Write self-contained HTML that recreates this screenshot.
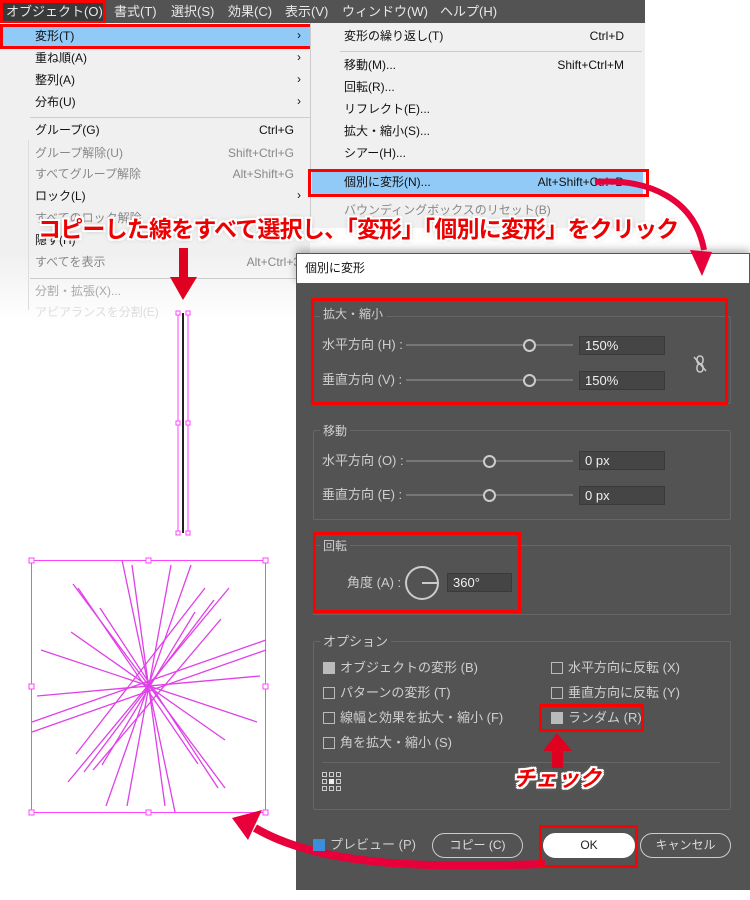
<!DOCTYPE html>
<html><head><meta charset="utf-8">
<style>
*{margin:0;padding:0;box-sizing:border-box}
body{width:750px;height:900px;position:relative;overflow:hidden;background:#fff;font-family:"Liberation Sans","Noto Sans CJK JP",sans-serif;font-size:12px;color:#111;line-height:1.15}
.a{position:absolute;white-space:nowrap}
.mb{left:0;top:0;width:645px;height:23px;background:#535353}
.mi{color:#e8e8e8;font-size:13px;top:5px}
.menu{left:0;top:23px;width:310px;height:300px;background:linear-gradient(#f0f0f0 0,#f0f0f0 230px,#fff 300px)}
.sub{left:310px;top:23px;width:335px;height:205px;background:#f0f0f0;border-left:1px solid #ccc}
.it{font-size:12px;color:#111}
.g{color:#888}
.sc{font-size:12px;text-align:right}
.sep{height:1px;background:#ccc}
.red{border:3px solid #f00}
.dlg{left:296px;top:253px;width:454px;height:637px;background:#535353}
.lt{color:#cfcfcf;font-size:12px}
.box{border:1px solid #666;border-radius:2px}
.inp{background:#454545;border:1px solid #3a3a3a;color:#f0f0f0;font-size:13px;padding:2px 5px;height:19px}
.sl{height:2px;background:#777}
.kn{width:13px;height:13px;border:2px solid #ccc;border-radius:50%;background:#535353}
.cb{width:12px;height:12px;border:1px solid #bbb}
.btn{border:1px solid #ccc;border-radius:13px;color:#ddd;font-size:12px;text-align:center;line-height:23px;height:25px}
.cap{font-weight:bold;color:#e00;text-shadow:2px 0 #fff,-2px 0 #fff,0 2px #fff,0 -2px #fff,2px 2px #fff,-2px -2px #fff,2px -2px #fff,-2px 2px #fff,0 0 6px #999}
</style></head><body>
<div class="a mb"></div>
<div class="a" style="left:0;top:0;width:105px;height:23px;background:#3a3a3a"></div>
<div class="a mi" style="left:6px">オブジェクト(O)</div>
<div class="a mi" style="left:114px">書式(T)</div>
<div class="a mi" style="left:171px">選択(S)</div>
<div class="a mi" style="left:228px">効果(C)</div>
<div class="a mi" style="left:285px">表示(V)</div>
<div class="a mi" style="left:342px">ウィンドウ(W)</div>
<div class="a mi" style="left:440px">ヘルプ(H)</div>
<div class="a red" style="left:0;top:0;width:106px;height:24px"></div>

<div class="a menu"></div>
<div class="a" style="left:28px;top:140px;width:1px;height:170px;background:#ddd"></div>
<div class="a" style="left:2px;top:25px;width:308px;height:22px;background:#91c9f7"></div>
<div class="a red" style="left:0;top:24px;width:313px;height:25px"></div>
<div class="a it" style="left:35px;top:30px">変形(T)</div><div class="a it" style="left:297px;top:29px">›</div>
<div class="a it" style="left:35px;top:52px">重ね順(A)</div><div class="a it" style="left:297px;top:51px">›</div>
<div class="a it" style="left:35px;top:74px">整列(A)</div><div class="a it" style="left:297px;top:73px">›</div>
<div class="a it" style="left:35px;top:96px">分布(U)</div><div class="a it" style="left:297px;top:95px">›</div>
<div class="a sep" style="left:30px;top:117px;width:280px"></div>
<div class="a it" style="left:35px;top:124px">グループ(G)</div><div class="a sc" style="left:200px;top:124px;width:94px">Ctrl+G</div>
<div class="a it g" style="left:35px;top:147px">グループ解除(U)</div><div class="a sc g" style="left:200px;top:147px;width:94px">Shift+Ctrl+G</div>
<div class="a it g" style="left:35px;top:168px">すべてグループ解除</div><div class="a sc g" style="left:200px;top:168px;width:94px">Alt+Shift+G</div>
<div class="a it" style="left:35px;top:190px">ロック(L)</div><div class="a it" style="left:297px;top:189px">›</div>
<div class="a it g" style="left:35px;top:212px">すべてのロック解除</div>
<div class="a it" style="left:35px;top:234px">隠す(H)</div>
<div class="a it g" style="left:35px;top:256px">すべてを表示</div><div class="a sc g" style="left:200px;top:256px;width:100px">Alt+Ctrl+3</div>
<div class="a sep" style="left:30px;top:278px;width:280px"></div>
<div class="a it" style="left:35px;top:285px;color:#aaa">分割・拡張(X)...</div>
<div class="a it" style="left:35px;top:306px;color:#ddd">アピアランスを分割(E)</div>

<div class="a sub"></div>
<div class="a it" style="left:344px;top:30px">変形の繰り返し(T)</div><div class="a sc" style="left:520px;top:30px;width:104px">Ctrl+D</div>
<div class="a sep" style="left:340px;top:51px;width:302px"></div>
<div class="a it" style="left:344px;top:59px">移動(M)...</div><div class="a sc" style="left:520px;top:59px;width:104px">Shift+Ctrl+M</div>
<div class="a it" style="left:344px;top:81px">回転(R)...</div>
<div class="a it" style="left:344px;top:103px">リフレクト(E)...</div>
<div class="a it" style="left:344px;top:125px">拡大・縮小(S)...</div>
<div class="a it" style="left:344px;top:147px">シアー(H)...</div>
<div class="a" style="left:312px;top:172px;width:331px;height:22px;background:#91c9f7"></div>
<div class="a it" style="left:344px;top:176px">個別に変形(N)...</div><div class="a sc" style="left:520px;top:176px;width:104px">Alt+Shift+Ctrl+D</div>
<div class="a red" style="left:308px;top:169px;width:341px;height:28px"></div>
<div class="a it g" style="left:344px;top:204px">バウンディングボックスのリセット(B)</div>

<!-- dialog -->
<div class="a" style="left:296px;top:253px;width:454px;height:31px;background:#fff;border:1px solid #555;box-shadow:0 -3px 8px rgba(0,0,0,.3)"></div>
<div class="a it" style="left:305px;top:262px">個別に変形</div>
<div class="a dlg" style="top:284px;height:606px"></div>

<div class="a box" style="left:313px;top:316px;width:418px;height:88px"></div>
<div class="a lt" style="left:320px;top:308px;background:#535353;padding:0 3px">拡大・縮小</div>
<div class="a lt" style="left:322px;top:338px;font-size:13px">水平方向 (H) :</div>
<div class="a sl" style="left:406px;top:344px;width:167px"></div><div class="a kn" style="left:523px;top:339px"></div>
<div class="a inp" style="left:579px;top:336px;width:86px">150%</div>
<div class="a lt" style="left:322px;top:373px;font-size:13px">垂直方向 (V) :</div>
<div class="a sl" style="left:406px;top:379px;width:167px"></div><div class="a kn" style="left:523px;top:374px"></div>
<div class="a inp" style="left:579px;top:371px;width:86px">150%</div>
<svg class="a" style="left:692px;top:354px" width="16" height="20" viewBox="0 0 16 20"><rect x="5" y="2" width="6" height="8" rx="3" fill="none" stroke="#ccc" stroke-width="1.5"/><rect x="5" y="10" width="6" height="8" rx="3" fill="none" stroke="#ccc" stroke-width="1.5"/><line x1="2" y1="3" x2="14" y2="17" stroke="#ccc" stroke-width="1.5"/></svg>
<div class="a red" style="left:311px;top:298px;width:417px;height:107px"></div>

<div class="a box" style="left:313px;top:430px;width:418px;height:90px"></div>
<div class="a lt" style="left:320px;top:425px;background:#535353;padding:0 3px">移動</div>
<div class="a lt" style="left:322px;top:454px;font-size:13px">水平方向 (O) :</div>
<div class="a sl" style="left:406px;top:460px;width:167px"></div><div class="a kn" style="left:483px;top:455px"></div>
<div class="a inp" style="left:579px;top:451px;width:86px">0 px</div>
<div class="a lt" style="left:322px;top:488px;font-size:13px">垂直方向 (E) :</div>
<div class="a sl" style="left:406px;top:494px;width:167px"></div><div class="a kn" style="left:483px;top:489px"></div>
<div class="a inp" style="left:579px;top:486px;width:86px">0 px</div>

<div class="a box" style="left:313px;top:545px;width:418px;height:70px"></div>
<div class="a lt" style="left:320px;top:540px;background:#535353;padding:0 3px">回転</div>
<div class="a lt" style="left:347px;top:576px;font-size:13px">角度 (A) :</div>
<svg class="a" style="left:404px;top:565px" width="36" height="36"><circle cx="18" cy="18" r="16" fill="none" stroke="#ccc" stroke-width="2"/><line x1="18" y1="18" x2="34" y2="18" stroke="#ccc" stroke-width="2"/></svg>
<div class="a inp" style="left:447px;top:573px;width:65px">360°</div>
<div class="a red" style="left:313px;top:532px;width:208px;height:81px"></div>

<div class="a box" style="left:313px;top:641px;width:418px;height:169px"></div>
<div class="a lt" style="left:320px;top:635px;background:#535353;padding:0 3px;font-size:13px">オプション</div>
<div class="a cb" style="left:323px;top:662px;background:#bbb"></div><div class="a lt" style="left:340px;top:661px;font-size:13px">オブジェクトの変形 (B)</div>
<div class="a cb" style="left:323px;top:687px"></div><div class="a lt" style="left:340px;top:686px;font-size:13px">パターンの変形 (T)</div>
<div class="a cb" style="left:323px;top:712px"></div><div class="a lt" style="left:340px;top:711px;font-size:13px">線幅と効果を拡大・縮小 (F)</div>
<div class="a cb" style="left:323px;top:737px"></div><div class="a lt" style="left:340px;top:736px;font-size:13px">角を拡大・縮小 (S)</div>
<div class="a cb" style="left:551px;top:662px"></div><div class="a lt" style="left:568px;top:661px;font-size:13px">水平方向に反転 (X)</div>
<div class="a cb" style="left:551px;top:687px"></div><div class="a lt" style="left:568px;top:686px;font-size:13px">垂直方向に反転 (Y)</div>
<div class="a cb" style="left:551px;top:712px;background:#bbb"></div><div class="a lt" style="left:568px;top:711px;font-size:13px">ランダム (R)</div>
<div class="a red" style="left:539px;top:704px;width:105px;height:28px"></div>
<div class="a" style="left:322px;top:762px;width:398px;height:1px;background:#666"></div>
<svg class="a" style="left:322px;top:772px" width="20" height="20"><g fill="none" stroke="#ccc"><rect x="0.5" y="0.5" width="4" height="4"/><rect x="7.5" y="0.5" width="4" height="4"/><rect x="14.5" y="0.5" width="4" height="4"/><rect x="0.5" y="7.5" width="4" height="4"/><rect x="14.5" y="7.5" width="4" height="4"/><rect x="0.5" y="14.5" width="4" height="4"/><rect x="7.5" y="14.5" width="4" height="4"/><rect x="14.5" y="14.5" width="4" height="4"/></g><rect x="7" y="7" width="5" height="5" fill="#eee"/></svg>

<!-- canvas graphics + arrows -->
<svg class="a" style="left:0;top:0" width="750" height="900">
<g stroke="#f4f" stroke-width="1" fill="#fff">
<line x1="183" y1="313" x2="183" y2="533" stroke="#222" stroke-width="2"/>
<line x1="178" y1="313" x2="178" y2="533"/><line x1="188" y1="313" x2="188" y2="533"/>
<rect x="176" y="311" width="4" height="4"/><rect x="186" y="311" width="4" height="4"/><rect x="176" y="421" width="4" height="4"/><rect x="186" y="421" width="4" height="4"/><rect x="176" y="531" width="4" height="4"/><rect x="186" y="531" width="4" height="4"/>
<rect x="31.5" y="560.5" width="234" height="252" fill="none"/>
</g>
<g stroke="#e040e8" stroke-width="1.3">
<line x1="122" y1="560" x2="175" y2="812"/><line x1="132" y1="565" x2="165" y2="806"/>
<line x1="171" y1="565" x2="127" y2="806"/><line x1="191" y1="565" x2="106" y2="806"/>
<line x1="73" y1="584" x2="225" y2="788"/><line x1="78" y1="588" x2="198" y2="764"/>
<line x1="100" y1="608" x2="218" y2="788"/>
<line x1="229" y1="588" x2="68" y2="782"/><line x1="205" y1="588" x2="76" y2="754"/><line x1="214" y1="600" x2="84" y2="772"/><line x1="221" y1="619" x2="93" y2="770"/>
<line x1="195" y1="612" x2="102" y2="765"/>
<line x1="71" y1="632" x2="225" y2="740"/><line x1="41" y1="650" x2="257" y2="722"/>
<line x1="266" y1="640" x2="32" y2="722"/><line x1="266" y1="650" x2="32" y2="732"/>
<line x1="260" y1="676" x2="37" y2="696"/>
</g>
<g fill="#fff" stroke="#f4f"><rect x="29" y="558" width="5" height="5"/><rect x="146" y="558" width="5" height="5"/><rect x="263" y="558" width="5" height="5"/><rect x="29" y="684" width="5" height="5"/><rect x="263" y="684" width="5" height="5"/><rect x="29" y="810" width="5" height="5"/><rect x="146" y="810" width="5" height="5"/><rect x="263" y="810" width="5" height="5"/></g>
<rect x="179" y="248" width="9" height="30" fill="#e00020"/><polygon points="170,277 197,277 183,300" fill="#e00020"/>
<rect x="552" y="750" width="11" height="18" fill="#e00020"/><polygon points="543,751 572,751 557,733" fill="#e00020"/>
<path d="M595 182 C650 178 695 200 704 250" stroke="#e8003a" stroke-width="6" fill="none"/>
<polygon points="690,250 712,252 702,276" fill="#e8003a"/>
<path d="M545 864 C420 868 320 866 255 828" stroke="#e8003a" stroke-width="8" fill="none"/>
<polygon points="232,818 262,810 248,840" fill="#e8003a"/>
</svg>
<div class="a" style="left:313px;top:839px;width:12px;height:12px;background:#3b8fd8"></div>
<div class="a lt" style="left:330px;top:838px;font-size:13px">プレビュー (P)</div>
<div class="a btn" style="left:432px;top:833px;width:91px">コピー (C)</div>
<div class="a btn" style="left:543px;top:833px;width:92px;background:#fff;color:#222;border-color:#fff">OK</div>
<div class="a btn" style="left:640px;top:833px;width:91px">キャンセル</div>
<div class="a" style="left:0;top:890px;width:750px;height:10px;background:#fff"></div>
<div class="a red" style="left:539px;top:825px;width:99px;height:43px"></div>

<div class="a cap" style="left:38px;top:216px;font-size:23px;letter-spacing:-0.8px">コピーした線をすべて選択し、「変形」「個別に変形」をクリック</div>
<div class="a cap" style="left:513px;top:766px;font-size:22px;font-style:italic">チェック</div>
</body></html>
